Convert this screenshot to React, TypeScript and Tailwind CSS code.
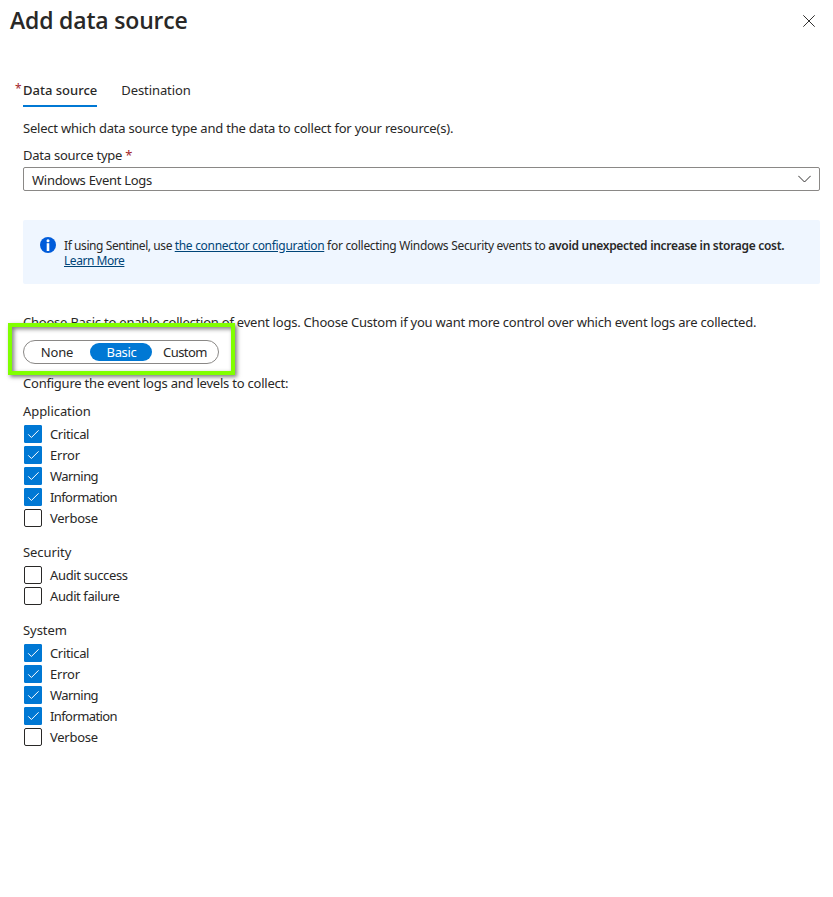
import { useState } from "react";
import clsx from "clsx";

const modes = [
  { name: "None", className: "w-[66px] tracking-[-0.1px]" },
  { name: "Basic", className: "w-[62px] pl-px tracking-[-0.35px]" },
  { name: "Custom", className: "w-[66px] tracking-[-0.55px]" },
];

const levels = [
  { label: "Critical", checked: true, className: "tracking-[-0.35px]" },
  { label: "Error", checked: true, className: "tracking-[-0.2px]" },
  { label: "Warning", checked: true, className: "tracking-[-0.55px]" },
  { label: "Information", checked: true, className: "tracking-[-0.6px]" },
  { label: "Verbose", checked: false, className: "tracking-[-0.25px]" },
];

const groups = [
  { title: "Application", levels },
  {
    title: "Security",
    levels: [
      { label: "Audit success", checked: false, className: "tracking-[-0.35px]" },
      { label: "Audit failure", checked: false, className: "tracking-[-0.4px]" },
    ],
  },
  { title: "System", levels },
];

type LevelProps = { label: string; initial: boolean; className: string };

function Level({ label, initial, className }: LevelProps) {
  const [checked, setChecked] = useState(initial);

  return (
    <button
      role="checkbox"
      aria-checked={checked}
      onClick={() => setChecked(!checked)}
      className="flex h-[21px] items-center gap-2 pl-px"
    >
      <span
        className={clsx(
          "flex size-[18px] shrink-0 items-center justify-center border",
          checked
            ? "rounded-[1px] border-[#0078d4] bg-[#0078d4]"
            : "rounded-[2px] border-[#292827] bg-white"
        )}
      >
        {checked && (
          <svg width="16" height="16" viewBox="0 0 16 16" fill="none" stroke="#fff">
            <path d="M3.2 8.3 6.4 11.5 13.6 4.3" />
          </svg>
        )}
      </span>
      <span className={className}>{label}</span>
    </button>
  );
}

export default function App() {
  const [mode, setMode] = useState("Basic");

  return (
    <div className="h-[897px] w-[833px] overflow-hidden bg-white font-['Noto_Sans',sans-serif] text-[13px] leading-5 whitespace-nowrap text-[#292827]">
      <header className="flex h-[42px] items-center justify-between pr-[18px] pl-[10px]">
        <h1 className="pb-[2px] font-['Open_Sans',sans-serif] text-[23px] leading-8 font-semibold tracking-[-0.18px]">
          Add data source
        </h1>
        <button aria-label="Close">
          <svg width="12" height="12" viewBox="0 0 12 12" fill="none" stroke="#323130">
            <path d="M.3.3l11.4 11.4M11.7.3.3 11.7" />
          </svg>
        </button>
      </header>

      <main className="pr-[13px] pl-[23px]">
        <nav className="flex gap-6 pt-[38px]">
          <button className="relative h-[27px] border-b-2 border-[#0078d4] pb-[5px] font-medium">
            <span className="absolute -top-px -left-2 text-[12px] font-normal text-[#a4262c]">
              *
            </span>
            Data source
          </button>
          <button className="h-[27px] pb-[7px] tracking-[-0.08px]">Destination</button>
        </nav>

        <p className="mt-[11px] tracking-[-0.21px]">
          Select which data source type and the data to collect for your resource(s).
        </p>
        <p className="mt-[7px] tracking-[-0.24px]">
          Data source type <span className="text-[#a4262c]">*</span>
        </p>
        <button className="mt-[2px] flex h-6 w-full items-center justify-between rounded-[2px] border border-[#8a8886] pr-2 pl-2">
          <span className="pt-[2px] tracking-[-0.28px]">Windows Event Logs</span>
          <svg width="13" height="8" viewBox="0 0 13 8" fill="none" stroke="#323130">
            <path d="M.3.8l6.2 6.2L12.7.8" />
          </svg>
        </button>

        <section className="mt-[29px] flex h-16 gap-2 rounded-[2px] bg-[#eff6ff] pt-[17px] pl-[17px] text-[12px] leading-[15px]">
          <svg className="shrink-0" width="16" height="16" viewBox="0 0 16 16">
            <circle cx="8" cy="8" r="8" fill="#015cda" />
            <circle cx="8" cy="3.7" r="1.5" fill="#fff" />
            <path d="M6.7 6.2h2.6v7.8H6.7z" fill="#fff" />
          </svg>
          <p className="pt-px tracking-[-0.3px]">
            <span className="tracking-[-0.42px]">If using Sentinel, use </span>
            <a className="text-[#004578] underline">the connector configuration</a> for
            collecting Windows Security events to{" "}
            <b className="font-semibold">avoid unexpected increase in storage cost.</b>
            <br />
            <a className="tracking-[-0.45px] text-[#004578] underline">Learn More</a>
          </p>
        </section>

        <p className="mt-7 tracking-[-0.22px]">
          Choose Basic to enable collection of event logs. Choose Custom if you want more
          control over which event logs are collected.
        </p>

        <div className="relative mt-2 h-6 w-[196px]">
          <div className="pointer-events-none absolute -top-[17px] -left-[15px] h-[52px] w-[227px] border-4 border-[#80ff00] shadow-[2px_2px_4px_rgba(0,0,0,0.5),inset_2px_2px_4px_rgba(0,0,0,0.5)]" />
          <div className="flex h-6 items-center rounded-full border border-[#8a8886]">
            {modes.map(({ name, className }) => (
              <button
                key={name}
                onClick={() => setMode(name)}
                className={clsx(
                  "h-[18px] shrink-0 rounded-full leading-[18px]",
                  className,
                  mode === name && "bg-[#0078d4] text-white"
                )}
              >
                {name}
              </button>
            ))}
          </div>
        </div>

        <p className="mt-[9px] tracking-[-0.22px]">
          Configure the event logs and levels to collect:
        </p>

        <div className="mt-2 flex flex-col gap-[14px]">
          {groups.map((group) => (
            <section key={group.title}>
              <h2 className="mb-[2px] tracking-[-0.06px]">{group.title}</h2>
              {group.levels.map(({ label, checked, className }) => (
                <Level key={label} label={label} initial={checked} className={className} />
              ))}
            </section>
          ))}
        </div>
      </main>
    </div>
  );
}
